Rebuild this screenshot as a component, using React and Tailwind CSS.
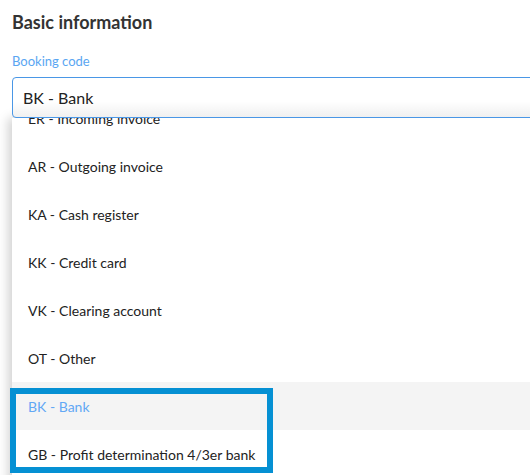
import React from 'react';

const options = [
    'ER - Incoming invoice',
    'AR - Outgoing invoice',
    'KA - Cash register',
    'KK - Credit card',
    'VK - Clearing account',
    'OT - Other',
    'BK - Bank',
    'GB - Profit determination 4/3er bank',
];

function App() {
    return (
        <div className="w-[530px] h-[475px] overflow-hidden bg-white text-[#333]" style={{ fontFamily: 'Lato, "Open Sans", sans-serif' }}>
            <div className="pl-3 pt-[11px]">
                <h2 className="text-[18px] font-bold leading-[22px] text-[#333]">Basic information</h2>
                <label className="block mt-[20px] text-[13px] leading-[16px] text-[#5aa6f2]">Booking code</label>
                <div className="w-[600px] mt-[8px] h-[41px] border border-[#4a97e6] rounded-[4px] bg-gradient-to-b from-white from-60% to-[#f0f0f0] relative z-10 flex items-center pl-[10px]">
                    <span className="text-[16px] text-[#222]">BK - Bank</span>
                </div>
                <div className="relative">
                    <div className="w-[600px] h-[400px] overflow-hidden bg-white shadow-[-4px_0_10px_rgba(0,0,0,0.18)]">
                        <ul className="-mt-[24px]">
                            {options.map((opt) => {
                                const active = opt === 'BK - Bank';
                                return (
                                    <li key={opt} className={`h-[48px] flex items-center pl-4 text-[14px] ${active ? 'bg-[#f4f4f4] text-[#62a8f5]' : 'text-[#222]'}`}>
                                        {opt}
                                    </li>
                                );
                            })}
                        </ul>
                    </div>
                    <div className="absolute left-[-2px] top-[270px] w-[263px] h-[85px] border-[6px] border-[#0590d3]"></div>
                </div>
            </div>
        </div>
    );
}

export default App;
